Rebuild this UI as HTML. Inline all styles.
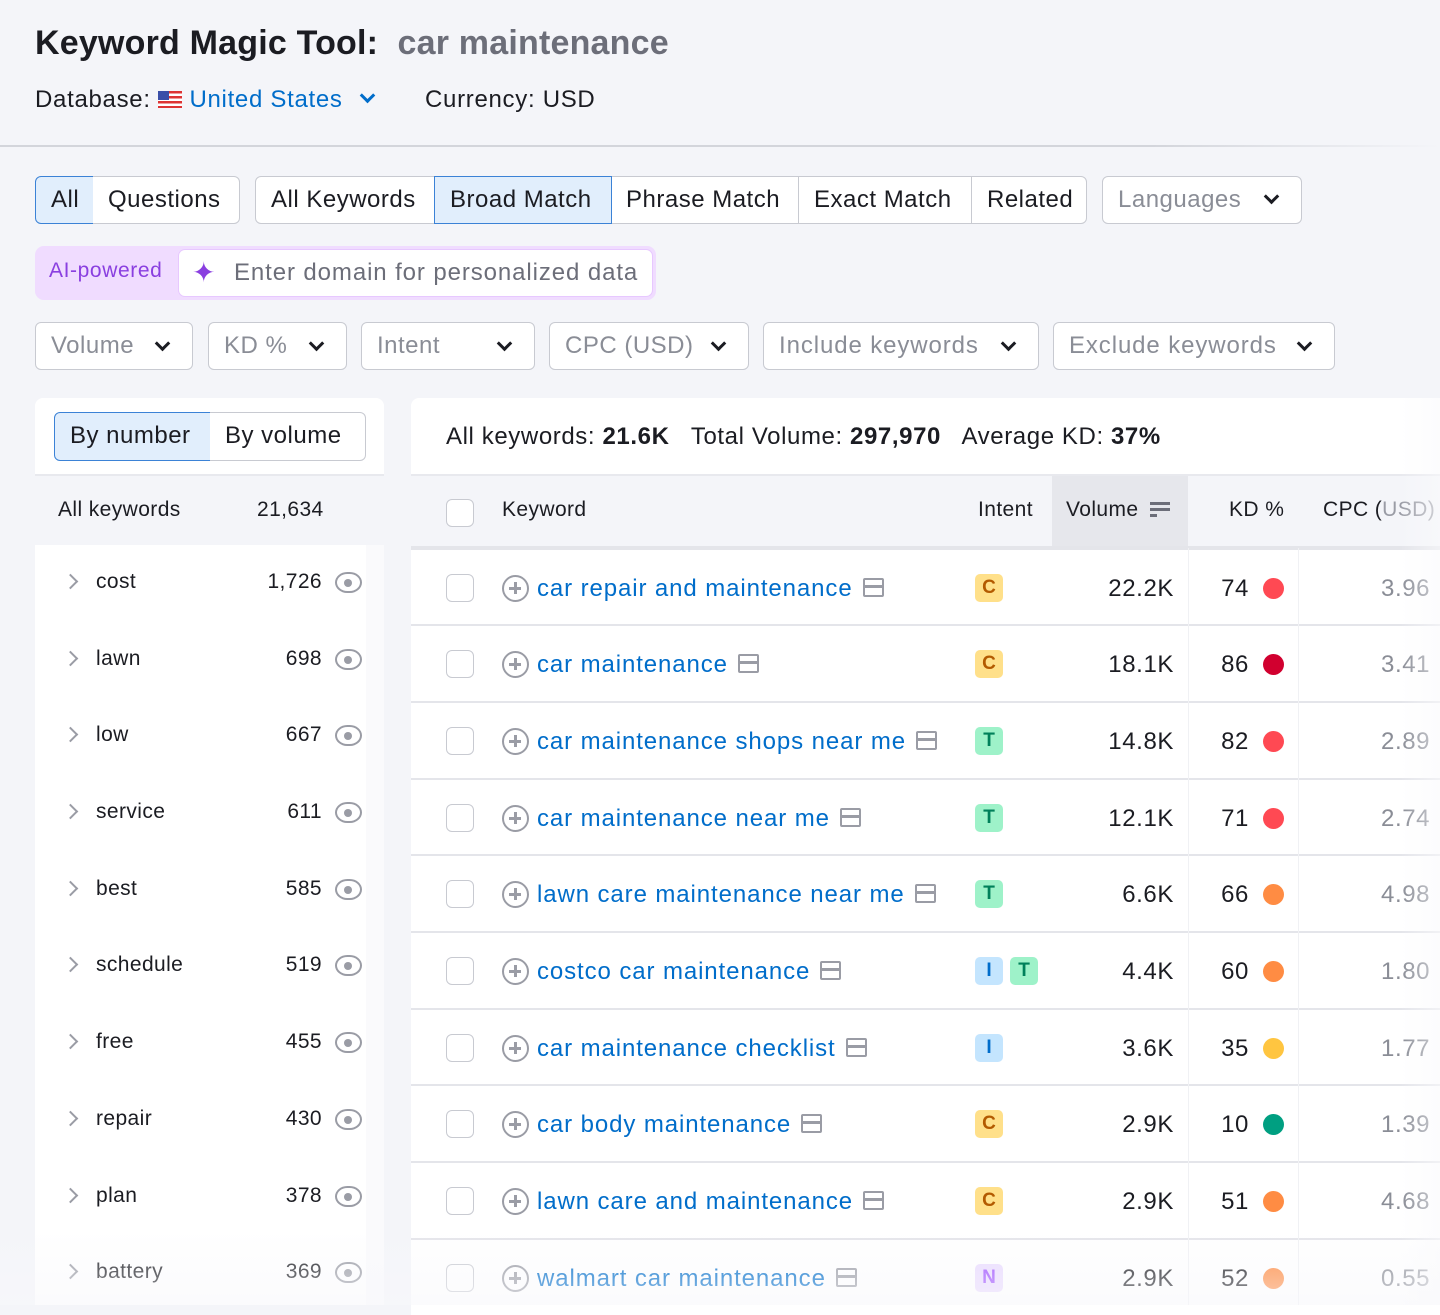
<!DOCTYPE html>
<html><head><meta charset="utf-8"><style>
*{box-sizing:border-box;margin:0;padding:0}
body{width:1440px;height:1305px;overflow:hidden;background:#f4f5f9;font-family:"Liberation Sans",sans-serif;color:#1b1c22;position:relative;letter-spacing:0.4px}
.a{position:absolute;white-space:nowrap}
.btn{position:absolute;height:48px;border:1.5px solid #c8cad1;background:#fff;font-size:24px;line-height:45px;padding:0 15px;letter-spacing:0.5px}
.sel{border-radius:6px;color:#8a8d96}
.chev{position:absolute;width:11px;height:11px;border-right:3px solid #1b1c22;border-bottom:3px solid #1b1c22;transform:rotate(45deg)}
.panel{position:absolute;background:#fff}
.row{position:absolute;left:411px;width:1029px;height:77px;border-top:2px solid #e4e5ea;background:#fff}
.cb{position:absolute;left:35px;width:28px;height:28px;border:1.5px solid #c8cad1;border-radius:6px;background:#fff}
.plus{position:absolute;left:91px;width:27px;height:27px;border:2.5px solid #9a9ca5;border-radius:50%}
.plus:before{content:"";position:absolute;left:5px;top:10px;width:12px;height:2.5px;background:#9a9ca5}
.plus:after{content:"";position:absolute;left:10px;top:5px;width:2.5px;height:12px;background:#9a9ca5}
.kw{position:absolute;left:126px;font-size:24px;color:#006dca;letter-spacing:0.9px}
.ser{display:inline-block;width:21px;height:19px;border:2.5px solid #9a9ca5;border-radius:2px;margin-left:10px;vertical-align:-1px;position:relative}
.ser:after{content:"";position:absolute;left:0;right:0;top:5px;height:2.5px;background:#9a9ca5}
.tag{position:absolute;width:28px;height:28px;border-radius:5px;font-size:19px;font-weight:bold;text-align:center;line-height:28px;letter-spacing:0}
.C{background:#ffe08a;color:#b35a00}.T{background:#9ef2c9;color:#00805a}.I{background:#c4e5fe;color:#006dca}.N{background:#eadbff;color:#9d4dff}
.vol{position:absolute;right:266px;font-size:24px;letter-spacing:0.6px}
.kd{position:absolute;right:191px;font-size:24px;letter-spacing:0.6px}
.dot{position:absolute;left:852px;width:21px;height:21px;border-radius:50%}
.cpc{position:absolute;left:970px;font-size:24px;color:#8a8d96;letter-spacing:0.6px}
.li{position:absolute;left:35px;width:331px;height:77px}
.li .gt{position:absolute;left:30px;top:30px;width:11px;height:11px;border-right:2.5px solid #9a9ca5;border-top:2.5px solid #9a9ca5;transform:rotate(45deg)}
.li .w{position:absolute;left:61px;top:24px;font-size:21px}
.li .n{position:absolute;right:44px;top:24px;font-size:21px}
.eye{position:absolute;right:4px;top:26px;width:27px;height:21px;border:2.5px solid #9a9ca5;border-radius:50%/55%}
.eye:after{content:"";position:absolute;left:7px;top:5px;width:8px;height:8px;border-radius:50%;background:#9a9ca5}
</style></head><body>
<div class="a" style="left:35px;top:24px;font-size:34px;font-weight:bold;letter-spacing:0.2px">Keyword Magic Tool: <span style="color:#6c6e79;font-weight:bold">&nbsp;car maintenance</span></div>
<div class="a" style="left:35px;top:86px;font-size:24px;letter-spacing:0.7px">Database: <span style="display:inline-block;width:24px;height:17px;background:repeating-linear-gradient(#d33 0 2.5px,#fff 2.5px 5px);position:relative;vertical-align:-1px"><span style="position:absolute;left:0;top:0;width:11px;height:9px;background:#3a4fa8"></span></span> <span style="color:#006dca">United States</span></div>
<div class="chev" style="left:362px;top:90px;border-color:#006dca"></div>
<div class="a" style="left:425px;top:86px;font-size:24px;letter-spacing:0.7px">Currency: USD</div>
<div class="a" style="left:0;top:145px;width:1440px;height:2px;background:linear-gradient(90deg,#d3d5db 80%,#f4f5f9)"></div>

<div class="btn" style="left:35px;top:176px;width:59px;border-radius:6px 0 0 6px;background:#e1eefc;border-color:#3b82d6">All</div>
<div class="btn" style="left:93px;top:176px;width:147px;border-radius:0 6px 6px 0;border-left:none">Questions</div>
<div class="btn" style="left:255px;top:176px;width:180px;border-radius:6px 0 0 6px">All Keywords</div>
<div class="btn" style="left:610px;top:176px;width:190px">Phrase Match</div>
<div class="btn" style="left:798px;top:176px;width:175px">Exact Match</div>
<div class="btn" style="left:971px;top:176px;width:116px;border-radius:0 6px 6px 0">Related</div>
<div class="btn" style="left:434px;top:176px;width:178px;background:#e1eefc;border-color:#3b82d6">Broad Match</div>
<div class="btn sel" style="left:1102px;top:176px;width:200px">Languages</div>
<div class="chev" style="left:1266px;top:191px"></div>

<div class="a" style="left:35px;top:246px;width:621px;height:54px;border-radius:9px;background:#f0dcff"></div>
<div class="a" style="left:49px;top:259px;font-size:21px;color:#8a3fe0;letter-spacing:0.6px">AI-powered</div>
<div class="a" style="left:178px;top:249px;width:475px;height:48px;border-radius:7px;background:#fff;border:1.5px solid #e7c8ff"></div>
<div class="a" style="left:192px;top:256px;font-size:28px;color:#8a3fe0">✦</div>
<div class="a" style="left:234px;top:259px;font-size:24px;color:#6c6e79;letter-spacing:0.9px">Enter domain for personalized data</div>

<div class="btn sel" style="left:35px;top:322px;width:158px">Volume</div><div class="chev" style="left:157px;top:338px"></div>
<div class="btn sel" style="left:208px;top:322px;width:139px">KD %</div><div class="chev" style="left:311px;top:338px"></div>
<div class="btn sel" style="left:361px;top:322px;width:174px">Intent</div><div class="chev" style="left:499px;top:338px"></div>
<div class="btn sel" style="left:549px;top:322px;width:200px">CPC (USD)</div><div class="chev" style="left:713px;top:338px"></div>
<div class="btn sel" style="left:763px;top:322px;width:276px;letter-spacing:0.9px">Include keywords</div><div class="chev" style="left:1003px;top:338px"></div>
<div class="btn sel" style="left:1053px;top:322px;width:282px;letter-spacing:0.9px">Exclude keywords</div><div class="chev" style="left:1299px;top:338px"></div>

<!-- left panel -->
<div class="panel" style="left:35px;top:398px;width:349px;height:907px;border-radius:8px 8px 0 0"></div>
<div class="a" style="left:366px;top:545px;width:18px;height:760px;background:#fafafc"></div>
<div class="btn" style="left:54px;top:412px;width:157px;height:49px;border-radius:6px 0 0 6px;background:#e1eefc;border-color:#3b82d6">By number</div>
<div class="btn" style="left:210px;top:412px;width:156px;height:49px;border-radius:0 6px 6px 0;border-left:none">By volume</div>
<div class="a" style="left:35px;top:474px;width:349px;height:71px;background:#f4f5f9;border-top:2px solid #e8e9ee"></div>
<div class="a" style="left:58px;top:498px;font-size:21px">All keywords</div>
<div class="a" style="left:257px;top:498px;font-size:21px">21,634</div>
<div class="li" style="top:546px"><i class="gt"></i><span class="w">cost</span><span class="n">1,726</span><i class="eye"></i></div>
<div class="li" style="top:623px"><i class="gt"></i><span class="w">lawn</span><span class="n">698</span><i class="eye"></i></div>
<div class="li" style="top:699px"><i class="gt"></i><span class="w">low</span><span class="n">667</span><i class="eye"></i></div>
<div class="li" style="top:776px"><i class="gt"></i><span class="w">service</span><span class="n">611</span><i class="eye"></i></div>
<div class="li" style="top:853px"><i class="gt"></i><span class="w">best</span><span class="n">585</span><i class="eye"></i></div>
<div class="li" style="top:929px"><i class="gt"></i><span class="w">schedule</span><span class="n">519</span><i class="eye"></i></div>
<div class="li" style="top:1006px"><i class="gt"></i><span class="w">free</span><span class="n">455</span><i class="eye"></i></div>
<div class="li" style="top:1083px"><i class="gt"></i><span class="w">repair</span><span class="n">430</span><i class="eye"></i></div>
<div class="li" style="top:1160px"><i class="gt"></i><span class="w">plan</span><span class="n">378</span><i class="eye"></i></div>
<div class="li" style="top:1236px"><i class="gt"></i><span class="w">battery</span><span class="n">369</span><i class="eye"></i></div>

<!-- right panel -->
<div class="panel" style="left:411px;top:398px;width:1029px;height:907px;border-radius:8px 0 0 0"></div>
<div class="a" style="left:446px;top:423px;font-size:24px;letter-spacing:0.6px">All keywords: <b>21.6K</b> &nbsp; Total Volume: <b>297,970</b> &nbsp; Average KD: <b>37%</b></div>
<div class="a" style="left:411px;top:474px;width:1029px;height:74px;background:#f4f5f9;border-top:2px solid #e8e9ee;border-bottom:2px solid #e4e5ea"></div>
<div class="a" style="left:1052px;top:476px;width:136px;height:70px;background:#e6e7ec"></div>
<div class="cb" style="left:446px;top:499px"></div>
<div class="a" style="left:502px;top:498px;font-size:21px">Keyword</div>
<div class="a" style="left:978px;top:498px;font-size:21px">Intent</div>
<div class="a" style="left:1066px;top:498px;font-size:21px">Volume</div>
<div class="a" style="left:1150px;top:502px;width:20px;height:3px;background:#6c6e79;box-shadow:0 6px 0 -0px #6c6e79"></div>
<div class="a" style="left:1150px;top:514px;width:7px;height:3px;background:#6c6e79"></div>
<div class="a" style="left:1229px;top:498px;font-size:21px">KD %</div>
<div class="a" style="left:1323px;top:498px;font-size:21px">CPC (<span style="color:#9a9ca5">USD)</span></div>

<div class="row" style="top:548px"><i class="cb" style="top:24px"></i><i class="plus" style="top:25px"></i><span class="kw" style="top:25px">car repair and maintenance<i class="ser"></i></span><span class="tag C" style="left:564px;top:24px">C</span><span class="vol" style="top:25px">22.2K</span><span class="kd" style="top:25px">74</span><i class="dot" style="top:28px;background:#ff4953"></i><span class="cpc" style="top:25px">3.96</span></div>
<div class="row" style="top:624px"><i class="cb" style="top:24px"></i><i class="plus" style="top:25px"></i><span class="kw" style="top:25px">car maintenance<i class="ser"></i></span><span class="tag C" style="left:564px;top:24px">C</span><span class="vol" style="top:25px">18.1K</span><span class="kd" style="top:25px">86</span><i class="dot" style="top:28px;background:#d1002f"></i><span class="cpc" style="top:25px">3.41</span></div>
<div class="row" style="top:701px"><i class="cb" style="top:24px"></i><i class="plus" style="top:25px"></i><span class="kw" style="top:25px">car maintenance shops near me<i class="ser"></i></span><span class="tag T" style="left:564px;top:24px">T</span><span class="vol" style="top:25px">14.8K</span><span class="kd" style="top:25px">82</span><i class="dot" style="top:28px;background:#ff4953"></i><span class="cpc" style="top:25px">2.89</span></div>
<div class="row" style="top:778px"><i class="cb" style="top:24px"></i><i class="plus" style="top:25px"></i><span class="kw" style="top:25px">car maintenance near me<i class="ser"></i></span><span class="tag T" style="left:564px;top:24px">T</span><span class="vol" style="top:25px">12.1K</span><span class="kd" style="top:25px">71</span><i class="dot" style="top:28px;background:#ff4953"></i><span class="cpc" style="top:25px">2.74</span></div>
<div class="row" style="top:854px"><i class="cb" style="top:24px"></i><i class="plus" style="top:25px"></i><span class="kw" style="top:25px">lawn care maintenance near me<i class="ser"></i></span><span class="tag T" style="left:564px;top:24px">T</span><span class="vol" style="top:25px">6.6K</span><span class="kd" style="top:25px">66</span><i class="dot" style="top:28px;background:#ff8c43"></i><span class="cpc" style="top:25px">4.98</span></div>
<div class="row" style="top:931px"><i class="cb" style="top:24px"></i><i class="plus" style="top:25px"></i><span class="kw" style="top:25px">costco car maintenance<i class="ser"></i></span><span class="tag I" style="left:564px;top:24px">I</span><span class="tag T" style="left:599px;top:24px">T</span><span class="vol" style="top:25px">4.4K</span><span class="kd" style="top:25px">60</span><i class="dot" style="top:28px;background:#ff8c43"></i><span class="cpc" style="top:25px">1.80</span></div>
<div class="row" style="top:1008px"><i class="cb" style="top:24px"></i><i class="plus" style="top:25px"></i><span class="kw" style="top:25px">car maintenance checklist<i class="ser"></i></span><span class="tag I" style="left:564px;top:24px">I</span><span class="vol" style="top:25px">3.6K</span><span class="kd" style="top:25px">35</span><i class="dot" style="top:28px;background:#ffc540"></i><span class="cpc" style="top:25px">1.77</span></div>
<div class="row" style="top:1084px"><i class="cb" style="top:24px"></i><i class="plus" style="top:25px"></i><span class="kw" style="top:25px">car body maintenance<i class="ser"></i></span><span class="tag C" style="left:564px;top:24px">C</span><span class="vol" style="top:25px">2.9K</span><span class="kd" style="top:25px">10</span><i class="dot" style="top:28px;background:#009f81"></i><span class="cpc" style="top:25px">1.39</span></div>
<div class="row" style="top:1161px"><i class="cb" style="top:24px"></i><i class="plus" style="top:25px"></i><span class="kw" style="top:25px">lawn care and maintenance<i class="ser"></i></span><span class="tag C" style="left:564px;top:24px">C</span><span class="vol" style="top:25px">2.9K</span><span class="kd" style="top:25px">51</span><i class="dot" style="top:28px;background:#ff8c43"></i><span class="cpc" style="top:25px">4.68</span></div>
<div class="row" style="top:1238px"><i class="cb" style="top:24px"></i><i class="plus" style="top:25px"></i><span class="kw" style="top:25px">walmart car maintenance<i class="ser"></i></span><span class="tag N" style="left:564px;top:24px">N</span><span class="vol" style="top:25px">2.9K</span><span class="kd" style="top:25px">52</span><i class="dot" style="top:28px;background:#ff8c43"></i><span class="cpc" style="top:25px">0.55</span></div>

<div class="a" style="left:1188px;top:548px;width:1px;height:757px;background:#f0f1f4"></div>
<div class="a" style="left:1298px;top:548px;width:1px;height:757px;background:#f0f1f4"></div>
<div class="a" style="left:1400px;top:398px;width:40px;height:907px;background:linear-gradient(90deg,rgba(255,255,255,0),rgba(250,250,252,.6))"></div>
<div class="a" style="left:0;top:1230px;width:1440px;height:75px;background:linear-gradient(rgba(255,255,255,0),rgba(248,248,251,.6))"></div>
</body></html>
